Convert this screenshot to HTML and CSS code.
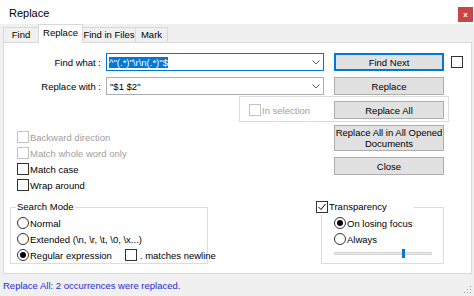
FILE: index.html
```html
<!DOCTYPE html>
<html lang="en">
<head>
    <meta charset="UTF-8">
    <title>Replace</title>
    <link rel="stylesheet" href="styles.css">
</head>
<body>
    <div class="dialog">
        <div class="titlebar">
            <span class="title">Replace</span>
            <span class="close">x</span>
        </div>

        <div class="tabs">
            <div class="tab t-find">Find</div>
            <div class="tab t-replace active">Replace</div>
            <div class="tab t-files">Find in Files</div>
            <div class="tab t-mark">Mark</div>
        </div>

        <div class="panel">
            <div class="field-row">
                <label class="field-label">Find what :</label>
                <div class="combo focused">
                    <span class="sel">^"(.*)"\r\n(.*)"$</span>
                    <svg class="chev" width="8" height="5" viewBox="0 0 8 5"><polyline points="0.5,0.5 4,4 7.5,0.5" fill="none" stroke="#606060" stroke-width="1"/></svg>
                </div>
                <button class="btn default">Find Next</button>
                <span class="check"></span>
            </div>
            <div class="field-row">
                <label class="field-label">Replace with :</label>
                <div class="combo">
                    <span class="val">"$1 $2"</span>
                    <svg class="chev" width="8" height="5" viewBox="0 0 8 5"><polyline points="0.5,0.5 4,4 7.5,0.5" fill="none" stroke="#606060" stroke-width="1"/></svg>
                </div>
                <button class="btn">Replace</button>
            </div>

            <div class="selection-box">
                <label class="opt disabled"><span class="check"></span>In selection</label>
                <button class="btn">Replace All</button>
            </div>

            <div class="middle">
                <div class="options">
                    <label class="opt disabled"><span class="check"></span>Backward direction</label>
                    <label class="opt disabled"><span class="check"></span>Match whole word only</label>
                    <label class="opt"><span class="check"></span>Match case</label>
                    <label class="opt"><span class="check"></span>Wrap around</label>
                </div>
                <div class="actions">
                    <button class="btn tall">Replace All in All Opened<br>Documents</button>
                    <button class="btn">Close</button>
                </div>
            </div>

            <div class="bottom">
                <div class="group search-mode">
                    <span class="legend">Search Mode</span>
                    <label class="opt"><span class="radio"></span>Normal</label>
                    <label class="opt"><span class="radio"></span>Extended (\n, \r, \t, \0, \x...)</label>
                    <label class="opt"><span class="radio on"></span>Regular expression<span class="check newline"></span>. matches newline</label>
                </div>
                <div class="group transparency">
                    <span class="legend">
                        <span class="check checked"><svg width="10" height="10" viewBox="0 0 10 10"><polyline points="1.5,5 4,7.5 8.5,2" fill="none" stroke="#000" stroke-width="1"/></svg></span>Transparency
                    </span>
                    <label class="opt"><span class="radio on"></span>On losing focus</label>
                    <label class="opt"><span class="radio"></span>Always</label>
                    <div class="slider"><span class="track"></span><span class="thumb"></span></div>
                </div>
            </div>
        </div>

        <div class="status">
            Replace All: 2 occurrences were replaced.
            <svg class="grip" width="8" height="8" viewBox="0 0 8 8" fill="#a0a0a0">
                <rect x="6" y="0" width="1" height="1"/>
                <rect x="3" y="3" width="1" height="1"/><rect x="6" y="3" width="1" height="1"/>
                <rect x="0" y="6" width="1" height="1"/><rect x="3" y="6" width="1" height="1"/><rect x="6" y="6" width="1" height="1"/>
            </svg>
        </div>
    </div>
</body>
</html>
```
FILE: styles.css
```css
body {
    margin: 0;
    background: #f0f0f0;
    font-family: 'Liberation Sans', Arial, sans-serif;
    font-size: 9.5px;
    color: #000;
}

.dialog {
    width: 474px;
    height: 296px;
    display: flex;
    flex-direction: column;
    overflow: hidden;
}

.titlebar {
    height: 24px;
    flex: none;
    background: #fff;
    display: flex;
    justify-content: space-between;
    align-items: flex-start;
}

.title {
    font-size: 11px;
    line-height: 14px;
    padding: 6px 0 0 9px;
}

.close {
    margin: 7px 1px 0 0;
    width: 15px;
    height: 15px;
    background: #c94444;
    color: #fff;
    font-size: 8px;
    font-weight: bold;
    display: flex;
    align-items: center;
    justify-content: center;
}

.tabs {
    height: 18px;
    flex: none;
    display: flex;
    align-items: flex-end;
    padding-left: 3px;
    position: relative;
    z-index: 1;
}

.tab {
    height: 15px;
    box-sizing: border-box;
    border: 1px solid #d9d9d9;
    border-bottom: none;
    margin-right: -1px;
    line-height: 14px;
    text-align: center;
    white-space: nowrap;
    background: #f0f0f0;
}

.t-find { width: 36px; }
.t-replace { width: 45px; }
.t-files { width: 54px; }
.t-mark { width: 33px; }

.tab.active {
    height: 19px;
    margin-bottom: -1px;
    background: #fff;
    line-height: 15px;
    position: relative;
    z-index: 1;
}

.panel {
    height: 232px;
    flex: none;
    box-sizing: border-box;
    margin: 0 2px 0 3px;
    border: 1px solid #d9d9d9;
    background: #fff;
    padding-top: 10px;
}

.field-row {
    display: flex;
    align-items: center;
    height: 18px;
}

.field-row + .field-row {
    margin-top: 6px;
}

.field-label {
    width: 97px;
    text-align: right;
}

.combo {
    margin-left: 5px;
    width: 218px;
    height: 18px;
    box-sizing: border-box;
    border: 1px solid #abadb3;
    display: flex;
    align-items: center;
    justify-content: space-between;
    padding: 0 3px 0 2px;
}

.combo.focused {
    border-color: #0078d7;
}

.sel {
    background: #0078d7;
    color: #fff;
    line-height: 11px;
}

.val {
    padding-left: 1px;
}

.btn {
    width: 110px;
    height: 18px;
    box-sizing: border-box;
    border: 1px solid #adadad;
    background: #e1e1e1;
    font: inherit;
    color: #000;
    padding: 0;
    flex: none;
    white-space: nowrap;
}

.field-row .btn {
    margin-left: 10px;
}

.btn.default {
    border-color: #0078d7;
    box-shadow: inset 0 0 0 1px #0078d7;
}

.btn.tall {
    height: 26px;
    line-height: 11px;
}

.check {
    width: 12px;
    height: 12px;
    box-sizing: border-box;
    border: 1px solid #333;
    background: #fff;
    display: inline-flex;
    align-items: center;
    justify-content: center;
    flex: none;
}

.field-row .check {
    margin-left: 7px;
}

.selection-box {
    margin: 1px 0 0 235px;
    width: 210px;
    height: 26px;
    box-sizing: border-box;
    border: 1px solid #dcdcdc;
    display: flex;
    align-items: flex-start;
    justify-content: space-between;
    padding: 4px 4px 0 9px;
}

.selection-box .opt {
    height: 18px;
}

.opt {
    display: flex;
    align-items: center;
    height: 16px;
    gap: 1px;
    white-space: nowrap;
}

.opt.disabled {
    color: #a0a0a0;
}

.opt.disabled .check {
    border-color: #c4c4c4;
}

.middle {
    display: grid;
    grid-template-columns: 330px 110px;
    align-items: start;
}

.options {
    padding: 7px 0 0 13px;
}

.actions {
    padding-top: 3px;
    display: flex;
    flex-direction: column;
    gap: 6px;
}

.bottom {
    display: flex;
    align-items: flex-start;
    margin-top: 14px;
}

.group {
    position: relative;
    border: 1px solid #dcdcdc;
    box-sizing: border-box;
    height: 57px;
    padding-top: 7px;
}

.search-mode {
    margin-left: 6px;
    width: 198px;
    padding-left: 6px;
}

.transparency {
    margin-left: 113px;
    width: 123px;
    padding-left: 12px;
}

.legend {
    position: absolute;
    top: -9px;
    left: 5px;
    background: #fff;
    padding: 0 1px;
    line-height: 16px;
    display: flex;
    align-items: center;
    gap: 1px;
}

.transparency .legend {
    left: -6px;
    padding: 0;
    width: 98px;
}

.radio {
    width: 12px;
    height: 12px;
    box-sizing: border-box;
    border-radius: 50%;
    border: 1px solid #333;
    background: #fff;
    display: flex;
    align-items: center;
    justify-content: center;
    flex: none;
}

.radio.on::after {
    content: "";
    width: 6px;
    height: 6px;
    border-radius: 50%;
    background: #000;
}

.check.newline {
    margin: 0 2px 0 12px;
}

.slider {
    position: relative;
    width: 98px;
    height: 12px;
}

.track {
    position: absolute;
    left: 0;
    right: 0;
    top: 5px;
    height: 3px;
    box-sizing: border-box;
    background: #e7eaea;
    border: 1px solid #d6d6d6;
}

.thumb {
    position: absolute;
    left: 68px;
    top: 2px;
    width: 3px;
    height: 9px;
    background: #0078d7;
}

.status {
    flex: 1;
    display: flex;
    align-items: center;
    padding-left: 3px;
    color: #2a2ad0;
    background: #f0f0f0;
    position: relative;
}

.grip {
    position: absolute;
    right: 2px;
    bottom: 2px;
}
```
